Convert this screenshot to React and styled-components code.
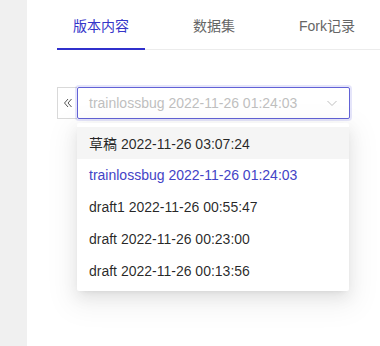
import React from "react";
import styled, { createGlobalStyle } from "styled-components";

const Global = createGlobalStyle`
  html, body { margin: 0; padding: 0; background: #fff; }
  body {
    font-family: "Liberation Sans", Arial, "Noto Sans CJK SC", sans-serif;
    font-size: 14px;
    color: rgba(0,0,0,0.85);
  }
`;

const Page = styled.div`
  display: flex;
  width: 380px;
  height: 346px;
  overflow: hidden;
`;

const Sidebar = styled.div`
  width: 27px;
  flex: none;
  background: #f0f0f0;
`;

const Main = styled.div`
  flex: 1;
  padding-left: 30px;
  display: flex;
  flex-direction: column;
`;

const TabBar = styled.div`
  display: flex;
  gap: 32px;
  height: 49px;
  border-bottom: 1px solid #ececec;
`;

const Tab = styled.div`
  position: relative;
  padding: 0 16px;
  display: flex;
  align-items: center;
  font-size: 14px;
  color: ${(p) => (p.$active ? "#3535c9" : "#666")};
  font-family: "Liberation Sans", Arial, "Noto Sans CJK SC", sans-serif;
  &::after {
    content: "";
    position: absolute;
    left: 0;
    right: 0;
    bottom: -1px;
    height: 2px;
    background: ${(p) => (p.$active ? "#3030cc" : "transparent")};
  }
`;

const SelectRow = styled.div`
  position: relative;
  display: flex;
  margin-top: 37px;
  height: 32px;
`;

const CollapseBtn = styled.div`
  width: 19px;
  height: 30px;
  border: 1px solid #d9d9d9;
  border-right: none;
  display: flex;
  align-items: center;
  justify-content: center;
  color: #555;
  background: #fff;
`;

const SelectBox = styled.div`
  width: 269px;
  height: 30px;
  border: 1px solid #6262d6;
  box-shadow: 0 0 0 2px rgba(80, 80, 220, 0.15);
  border-radius: 2px;
  display: flex;
  align-items: center;
  padding: 0 11px;
  box-sizing: content-box;
  width: 249px;
`;

const Placeholder = styled.span`
  flex: 1;
  color: #bfbfbf;
  white-space: nowrap;
`;

const Arrow = styled.span`
  display: flex;
  color: #bfbfbf;
`;

const Dropdown = styled.div`
  position: absolute;
  left: 20px;
  top: 36px;
  width: 272px;
  padding: 4px 0;
  background: #fff;
  border-radius: 2px;
  box-shadow: 0 3px 6px -4px rgba(0,0,0,0.12), 0 6px 16px 0 rgba(0,0,0,0.08), 0 9px 28px 8px rgba(0,0,0,0.05);
`;

const Option = styled.div`
  height: 32px;
  padding: 0 12px;
  display: flex;
  align-items: center;
  white-space: nowrap;
  background: ${(p) => (p.$hover ? "#f5f5f5" : "#fff")};
  color: ${(p) => (p.$selected ? "#4343c6" : "rgba(0,0,0,0.85)")};
`;

const options = [
  { label: "草稿 2022-11-26 03:07:24", hover: true },
  { label: "trainlossbug 2022-11-26 01:24:03", selected: true },
  { label: "draft1 2022-11-26 00:55:47" },
  { label: "draft 2022-11-26 00:23:00" },
  { label: "draft 2022-11-26 00:13:56" },
];

export default function App() {
  return (
    <>
      <Global />
      <Page>
        <Sidebar />
        <Main>
          <TabBar>
            <Tab $active>版本内容</Tab>
            <Tab>数据集</Tab>
            <Tab>Fork记录</Tab>
          </TabBar>
          <SelectRow>
            <CollapseBtn>
              <svg width="10" height="10" viewBox="0 0 10 10" fill="none" stroke="currentColor" strokeWidth="1">
                <path d="M5 1 L1.5 5 L5 9" />
                <path d="M8.5 1 L5 5 L8.5 9" />
              </svg>
            </CollapseBtn>
            <SelectBox>
              <Placeholder>trainlossbug 2022-11-26 01:24:03</Placeholder>
              <Arrow>
                <svg width="12" height="12" viewBox="0 0 12 12" fill="none" stroke="currentColor" strokeWidth="1">
                  <path d="M1.5 4 L6 8.5 L10.5 4" />
                </svg>
              </Arrow>
            </SelectBox>
            <Dropdown>
              {options.map((o) => (
                <Option key={o.label} $hover={o.hover} $selected={o.selected}>
                  {o.label}
                </Option>
              ))}
            </Dropdown>
          </SelectRow>
        </Main>
      </Page>
    </>
  );
}
